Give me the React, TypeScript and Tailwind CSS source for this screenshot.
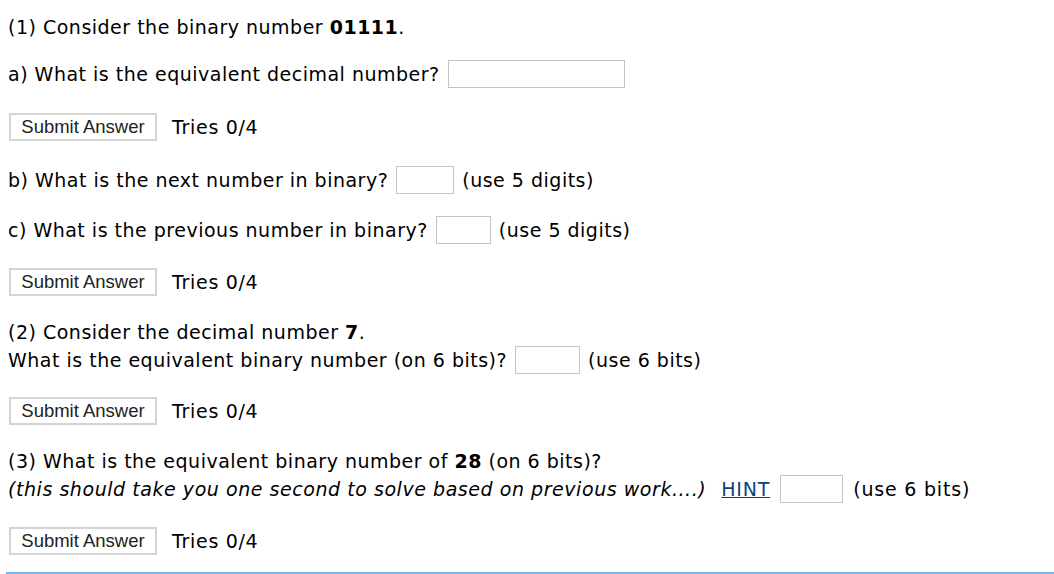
import React from 'react';

const verdana = 'font-["DejaVu_Sans","Verdana",sans-serif]';

function SubmitRow({ mt }: { mt: string }) {
  return (
    <div className={`${mt} flex h-[28px] items-center`}>
      <button
        type="button"
        className='ml-[1px] h-[28px] w-[148px] border-2 border-[#d4d4d4] bg-white font-["Liberation_Sans",Arial,sans-serif] text-[18.5px] leading-[22px] tracking-normal text-[#222]'
      >
        Submit Answer
      </button>
      <span className="ml-[15px] tracking-[0.7px] text-black">Tries 0/4</span>
    </div>
  );
}

function Box({ w }: { w: string }) {
  return <input type="text" className={`${w} h-[28px] border border-[#c4c4c4] bg-white outline-none`} />;
}

export default function App() {
  return (
    <div className={`${verdana} min-h-[574px] w-[1054px] bg-white pl-[8px] pt-[13px] text-[19px] tracking-[0.5px] text-black`}>
      {/* Question 1 */}
      <div className="flex h-[28px] items-center">
        <span>
          (1) Consider the binary number <b>01111</b>.
        </span>
      </div>
      <div className="mt-[19px] flex h-[28px] items-center gap-[8px]">
        <span>a) What is the equivalent decimal number?</span>
        <Box w="w-[177px]" />
      </div>
      <SubmitRow mt="mt-[25px]" />

      <div className="mt-[25px] flex h-[28px] items-center gap-[8px]">
        <span>b) What is the next number in binary?</span>
        <Box w="w-[58px]" />
        <span>(use 5 digits)</span>
      </div>
      <div className="mt-[22px] flex h-[28px] items-center gap-[8px]">
        <span>c) What is the previous number in binary?</span>
        <Box w="w-[55px]" />
        <span>(use 5 digits)</span>
      </div>
      <SubmitRow mt="mt-[24px]" />

      {/* Question 2 */}
      <div className="mt-[22px] flex h-[28px] items-center">
        <span>
          (2) Consider the decimal number <b>7</b>.
        </span>
      </div>
      <div className="flex h-[28px] items-center gap-[8px]">
        <span>What is the equivalent binary number (on 6 bits)?</span>
        <Box w="w-[65px]" />
        <span>(use 6 bits)</span>
      </div>
      <SubmitRow mt="mt-[23px]" />

      {/* Question 3 */}
      <div className="mt-[22px] flex h-[28px] items-center">
        <span>
          (3) What is the equivalent binary number of <b>28</b> (on 6 bits)?
        </span>
      </div>
      <div className="flex h-[28px] items-center">
        <i className="tracking-[0.55px]">(this should take you one second to solve based on previous work....)</i>
        <a href="#" className="ml-[15px] tracking-[0.8px] text-[#123f7c] underline">
          HINT
        </a>
        <span className="ml-[10px] flex">
          <Box w="w-[63px]" />
        </span>
        <span className="ml-[10px] tracking-[0.8px]">(use 6 bits)</span>
      </div>
      <SubmitRow mt="mt-[24px]" />

      <div className="ml-[-2px] mt-[17px] h-[2px] bg-[#7ab8f0]" />
    </div>
  );
}
